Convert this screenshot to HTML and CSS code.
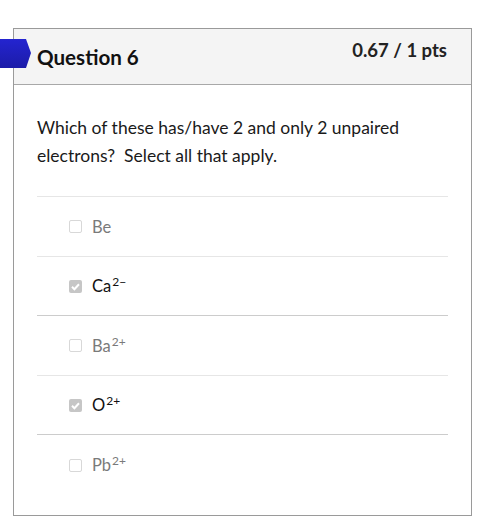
FILE: index.html
```html
<!DOCTYPE html>
<html lang="en">
<head>
  <meta charset="UTF-8">
  <title>Question 6</title>
  <link rel="stylesheet" href="styles.css">
</head>
<body>

  <div class="question">
    <div class="flag"></div>

    <div class="header">
      <span class="title">Question 6</span>
      <span class="points">0.67 / 1 pts</span>
    </div>

    <div class="content">
      <p class="text">Which of these has/have 2 and only 2 unpaired electrons?&nbsp; Select all that apply.</p>

      <div class="answers">
        <div class="answer">
          <span class="box"></span>
          <span class="label">Be</span>
        </div>
        <div class="answer selected">
          <span class="box"><svg viewBox="0 0 13 13" width="13" height="13"><path d="M3 6.8 L5.4 9.2 L10 4.2" fill="none" stroke="#fff" stroke-width="2"/></svg></span>
          <span class="label">Ca<sup>2&minus;</sup></span>
        </div>
        <div class="answer">
          <span class="box"></span>
          <span class="label">Ba<sup>2+</sup></span>
        </div>
        <div class="answer selected">
          <span class="box"><svg viewBox="0 0 13 13" width="13" height="13"><path d="M3 6.8 L5.4 9.2 L10 4.2" fill="none" stroke="#fff" stroke-width="2"/></svg></span>
          <span class="label">O<sup>2+</sup></span>
        </div>
        <div class="answer last">
          <span class="box"></span>
          <span class="label">Pb<sup>2+</sup></span>
        </div>
      </div>
    </div>
  </div>

</body>
</html>
```

FILE: styles.css
```css
body {
  margin: 0;
  background: #fff;
  font-family: Lato, "Liberation Sans", sans-serif;
  color: #1a1a1a;
}
.question {
  position: relative;
  box-sizing: border-box;
  width: 459px;
  margin: 28px 0 0 13px;
  border: 1px solid #9a9a9a;
}
.flag {
  position: absolute;
  left: -14px;
  top: 10px;
  width: 31px;
  height: 29px;
  background: linear-gradient(#2424d0, #1c1ca8);
  clip-path: polygon(0 0, 26px 0, 31px 14px, 26px 29px, 0 29px);
}
.header {
  display: flex;
  justify-content: space-between;
  align-items: flex-start;
  box-sizing: border-box;
  height: 56px;
  padding: 10px 24px 0 23px;
  background: #f4f4f4;
  border-bottom: 1px solid #a8a8a8;
}
.title {
  margin-top: 6px;
  font-size: 20.6px;
  line-height: 24px;
  font-weight: bold;
  color: #111;
}
.points {
  font-size: 18.5px;
  line-height: 22px;
  font-weight: bold;
  color: #222;
}
.content {
  padding: 29px 23px 20px 23px;
}
.text {
  margin: 0 0 26px 0;
  font-size: 17.5px;
  line-height: 28px;
  color: #1a1a1a;
}
.answers {
  border-top: 1px solid #e6e6e6;
}
.answer {
  display: flex;
  align-items: center;
  gap: 10px;
  height: 60px;
  box-sizing: border-box;
  padding: 0 0 0 32px;
  border-bottom: 1px solid #e6e6e6;
}
.answer.selected {
  height: 59px;
  border-bottom-color: #cccccc;
}
.answer.last {
  border-bottom: none;
}
.box {
  display: block;
  width: 13px;
  height: 13px;
  box-sizing: border-box;
  border: 1px solid #d8d8d8;
  border-radius: 2px;
  background: #fff;
}
.selected .box {
  border: none;
  background: #c6c6c6;
}
.box svg {
  display: block;
}
.label {
  font-size: 16.5px;
  color: #7a7a7a;
}
.selected .label {
  color: #111;
}
.label sup {
  font-size: 12px;
  vertical-align: 6px;
  line-height: 0;
  margin-left: 1px;
}
```
